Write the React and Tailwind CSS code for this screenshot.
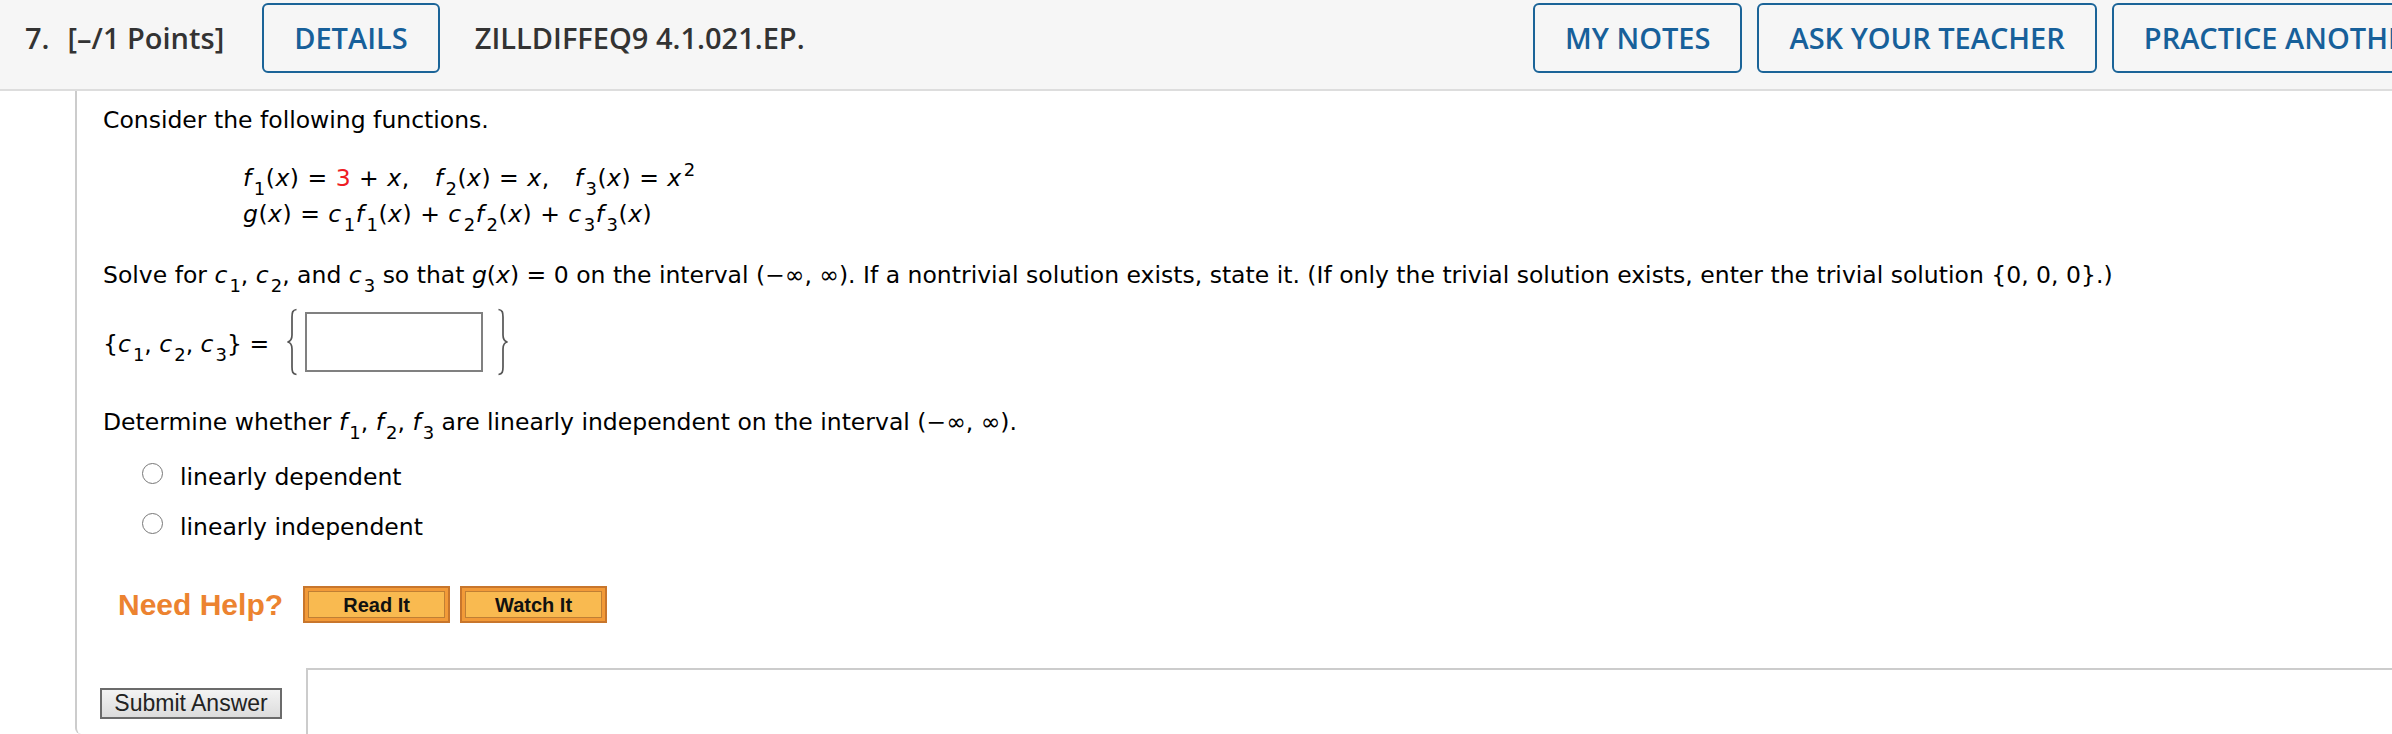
import React from "react";

// small helpers for math-ish text
function Sub({ children }) {
  return <span className="relative top-[9px] ml-[2px] text-[18px] leading-none not-italic">{children}</span>;
}

function Sup({ children }) {
  return <span className="relative top-[-10px] ml-[2px] text-[18px] leading-none not-italic">{children}</span>;
}

function V({ children }) {
  return <i className="italic">{children}</i>;
}

function LeftBrace() {
  return (
    <svg width="12" height="68" viewBox="0 0 12 68">
      <path
        d="M10.5 1.5 C6.5 2 6 4.5 6 9 L6 27 C6 31.5 4.5 33.5 1.5 34 C4.5 34.5 6 36.5 6 41 L6 59 C6 63.5 6.5 66 10.5 66.5"
        fill="none"
        stroke="#555"
        strokeWidth="1.7"
      />
    </svg>
  );
}

function RightBrace() {
  return (
    <svg width="12" height="68" viewBox="0 0 12 68">
      <path
        d="M1.5 1.5 C5.5 2 6 4.5 6 9 L6 27 C6 31.5 7.5 33.5 10.5 34 C7.5 34.5 6 36.5 6 41 L6 59 C6 63.5 5.5 66 1.5 66.5"
        fill="none"
        stroke="#555"
        strokeWidth="1.7"
      />
    </svg>
  );
}

function HeaderButton({ children }) {
  return (
    <button className="h-[70px] px-[30px] border-2 border-[#1b6498] rounded-[6px] text-[#17609a] whitespace-nowrap">
      {children}
    </button>
  );
}

function HelpButton({ label }) {
  return (
    <div className="w-[147px] h-[37px] border-2 border-[#c8762c] bg-[#f29a38] p-[3px]">
      <div className="h-full border border-[#c07f34] bg-[#f9ba50] flex items-center justify-center font-['Liberation_Sans',Arial,sans-serif] font-bold text-[20px] text-[#111]">
        {label}
      </div>
    </div>
  );
}

function Radio({ label }) {
  return (
    <div className="flex items-start pl-[39px]">
      <span className="w-[21px] h-[21px] rounded-full border-[1.5px] border-[#777] bg-white shrink-0" />
      <span className="ml-[17px]">{label}</span>
    </div>
  );
}

export default function App() {
  return (
    <div className="w-[2392px] h-[734px] bg-white overflow-hidden">
      {/* question header */}
      <div className="h-[91px] bg-[#f6f6f6] border-b-2 border-[#dddddd] flex items-start pt-[3px] overflow-hidden font-['Open_Sans',sans-serif] text-[29px] font-[650]">
        <div className="w-[1533px] shrink-0 flex items-start pl-[25px]">
          <div className="h-[70px] flex items-center text-[#333]">
            7.<span className="ml-[18px]">[–/1 Points]</span>
          </div>
          <div className="ml-[38px]">
            <HeaderButton>DETAILS</HeaderButton>
          </div>
          <div className="ml-[35px] h-[70px] flex items-center text-[#333]">ZILLDIFFEQ9 4.1.021.EP.</div>
        </div>
        <div className="flex gap-[15px] shrink-0">
          <HeaderButton>MY NOTES</HeaderButton>
          <HeaderButton>ASK YOUR TEACHER</HeaderButton>
          <HeaderButton>PRACTICE ANOTHER</HeaderButton>
        </div>
      </div>

      {/* question body */}
      <div className="ml-[75px] h-[643px] border-l-2 border-[#cccccc] rounded-bl-[6px] flex flex-col pl-[26px] pt-[15px] font-['DejaVu_Sans',Verdana,sans-serif] text-[23.5px] leading-[28px] text-black">
        <p>Consider the following functions.</p>

        <div className="mt-[26px] pl-[140px] leading-[36px] tracking-[0.5px] whitespace-nowrap">
          <div>
            <V>f</V>
            <Sub>1</Sub>(<V>x</V>) = <span className="text-[#ee1c24]">3</span> + <V>x</V>,
            <span className="ml-[25px]">
              <V>f</V>
              <Sub>2</Sub>(<V>x</V>) = <V>x</V>,
            </span>
            <span className="ml-[25px]">
              <V>f</V>
              <Sub>3</Sub>(<V>x</V>) = <V>x</V>
              <Sup>2</Sup>
            </span>
          </div>
          <div>
            <V>g</V>(<V>x</V>) = <V>c</V>
            <Sub>1</Sub>
            <V>f</V>
            <Sub>1</Sub>(<V>x</V>) + <V>c</V>
            <Sub>2</Sub>
            <V>f</V>
            <Sub>2</Sub>(<V>x</V>) + <V>c</V>
            <Sub>3</Sub>
            <V>f</V>
            <Sub>3</Sub>(<V>x</V>)
          </div>
        </div>

        <p className="mt-[29px] whitespace-nowrap">
          Solve for <V>c</V>
          <Sub>1</Sub>, <V>c</V>
          <Sub>2</Sub>, and <V>c</V>
          <Sub>3</Sub> so that <V>g</V>(<V>x</V>) = 0 on the interval (−∞, ∞). If a nontrivial solution exists, state
          it. (If only the trivial solution exists, enter the trivial solution {"{0, 0, 0}"}.)
        </p>

        <div className="mt-[19px] h-[67px] flex items-center whitespace-nowrap">
          <span className="relative top-[2px]">
            {"{"}
            <V>c</V>
            <Sub>1</Sub>, <V>c</V>
            <Sub>2</Sub>, <V>c</V>
            <Sub>3</Sub>
            {"}"} =
          </span>
          <span className="ml-[17px] flex">
            <LeftBrace />
          </span>
          <div className="ml-[7px] w-[178px] h-[60px] border-2 border-[#808080] bg-white" />
          <span className="ml-[14px] flex">
            <RightBrace />
          </span>
        </div>

        <p className="mt-[33px] whitespace-nowrap">
          Determine whether <V>f</V>
          <Sub>1</Sub>, <V>f</V>
          <Sub>2</Sub>, <V>f</V>
          <Sub>3</Sub> are linearly independent on the interval (−∞, ∞).
        </p>

        <div className="mt-[27px]">
          <Radio label="linearly dependent" />
        </div>
        <div className="mt-[22px]">
          <Radio label="linearly independent" />
        </div>

        <div className="mt-[45px] h-[37px] flex items-center pl-[15px]">
          <span className="font-['Liberation_Sans',Arial,sans-serif] font-bold text-[30px] leading-[37px] text-[#ec8330]">
            Need Help?
          </span>
          <div className="ml-[20px]">
            <HelpButton label="Read It" />
          </div>
          <div className="ml-[10px]">
            <HelpButton label="Watch It" />
          </div>
        </div>

        <div className="mt-[45px] flex flex-1">
          <div className="ml-[-3px] mt-[20px]">
            <button className="w-[182px] h-[31px] border-2 border-[#6b6b6b] bg-gradient-to-b from-[#f3f3f3] to-[#dcdcdc] font-['Liberation_Sans',Arial,sans-serif] text-[23px] leading-none text-[#222]">
              Submit Answer
            </button>
          </div>
          <div className="ml-[24px] flex-1 border-l-2 border-t-2 border-[#cccccc]" />
        </div>
      </div>
    </div>
  );
}
